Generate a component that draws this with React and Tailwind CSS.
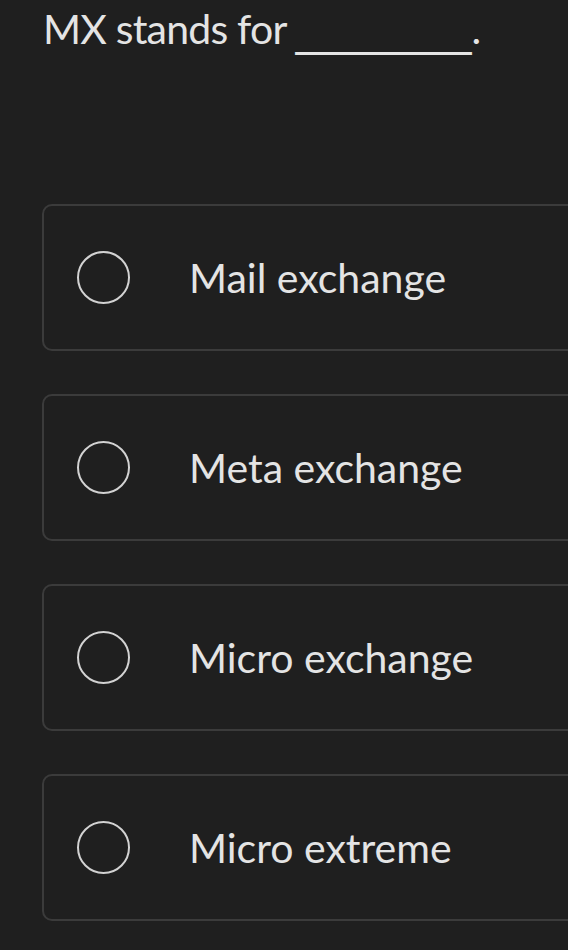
import React from 'react';

const OPTIONS = ['Mail exchange', 'Meta exchange', 'Micro exchange', 'Micro extreme'];

const App = () => {
  return (
    <div
      className="w-[568px] h-[950px] overflow-hidden bg-[#1f1f1f] text-[#e4e4e4] pl-[42px]"
      style={{ fontFamily: 'Lato, "Noto Sans", sans-serif' }}
    >
      <h1 className="h-[54px] text-[41px] leading-[50px] font-normal pt-[4px] ml-[1px] tracking-[-0.8px]">
        MX stands for{' '}
        <span
          style={{ fontFamily: '"DejaVu Sans", sans-serif' }}
          className="text-[44px] leading-none tracking-normal"
        >
          ________
        </span>
        .
      </h1>

      <div className="flex flex-col gap-[43px] mt-[150px]">
        {OPTIONS.map((opt) => (
          <div
            key={opt}
            className="w-[600px] h-[147px] flex items-center border-2 border-[#3b3b3b] rounded-[10px] pl-[33px]"
          >
            <span className="w-[53px] h-[53px] rounded-full border-2 border-[#d2d2d2] shrink-0" />
            <span className="ml-[59px] text-[41px] leading-none font-normal">{opt}</span>
          </div>
        ))}
      </div>
    </div>
  );
};

export default App;
